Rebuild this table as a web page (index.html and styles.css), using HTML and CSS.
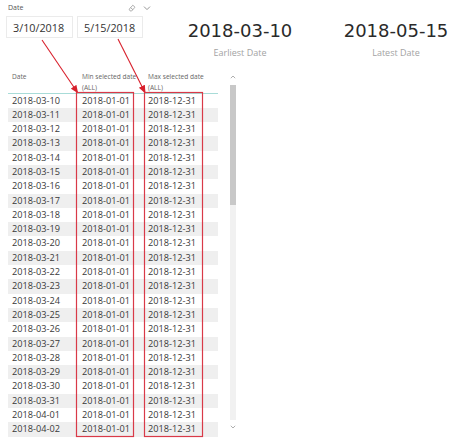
FILE: index.html
```html
<!DOCTYPE html>
<html>
<head>
<meta charset="utf-8">
<link rel="stylesheet" href="styles.css">
</head>
<body>
<div class="page">
  <div class="top">
    <div class="slicer">
      <div class="slicer-head">
        <span class="slicer-title">Date</span>
        <span class="slicer-icons">
          <svg class="ico" width="8" height="8" viewBox="0 0 8 8"><path d="M1.2 5.2 L4.8 1.2 L7 3.2 L3.6 7 L2.2 7 Z M2.6 3.6 L5 5.8" fill="none" stroke="#9a9a9a" stroke-width="0.8" stroke-linejoin="round"/></svg>
          <svg class="ico" width="8" height="8" viewBox="0 0 8 8"><path d="M1 2.6 L4 5.6 L7 2.6" fill="none" stroke="#8a8a8a" stroke-width="0.9"/></svg>
        </span>
      </div>
      <div class="inputs">
        <div class="inp">3/10/2018</div>
        <div class="inp">5/15/2018</div>
      </div>
    </div>
    <div class="kpi">
      <div class="kpi-val">2018-03-10</div>
      <div class="kpi-lbl">Earliest Date</div>
    </div>
    <div class="kpi">
      <div class="kpi-val">2018-05-15</div>
      <div class="kpi-lbl">Latest Date</div>
    </div>
  </div>
  <div class="tablewrap">
    <div class="table">
      <div class="thead">
        <div class="th c1">Date</div>
        <div class="th c2">Min selected date<br>(ALL)</div>
        <div class="th c3">Max selected date<br>(ALL)</div>
      </div>
      <div class="rows" id="rows">
        <div class="row"><span class="c1">2018-03-10</span><span class="c2">2018-01-01</span><span class="c3">2018-12-31</span></div>
        <div class="row alt"><span class="c1">2018-03-11</span><span class="c2">2018-01-01</span><span class="c3">2018-12-31</span></div>
        <div class="row"><span class="c1">2018-03-12</span><span class="c2">2018-01-01</span><span class="c3">2018-12-31</span></div>
        <div class="row alt"><span class="c1">2018-03-13</span><span class="c2">2018-01-01</span><span class="c3">2018-12-31</span></div>
        <div class="row"><span class="c1">2018-03-14</span><span class="c2">2018-01-01</span><span class="c3">2018-12-31</span></div>
        <div class="row alt"><span class="c1">2018-03-15</span><span class="c2">2018-01-01</span><span class="c3">2018-12-31</span></div>
        <div class="row"><span class="c1">2018-03-16</span><span class="c2">2018-01-01</span><span class="c3">2018-12-31</span></div>
        <div class="row alt"><span class="c1">2018-03-17</span><span class="c2">2018-01-01</span><span class="c3">2018-12-31</span></div>
        <div class="row"><span class="c1">2018-03-18</span><span class="c2">2018-01-01</span><span class="c3">2018-12-31</span></div>
        <div class="row alt"><span class="c1">2018-03-19</span><span class="c2">2018-01-01</span><span class="c3">2018-12-31</span></div>
        <div class="row"><span class="c1">2018-03-20</span><span class="c2">2018-01-01</span><span class="c3">2018-12-31</span></div>
        <div class="row alt"><span class="c1">2018-03-21</span><span class="c2">2018-01-01</span><span class="c3">2018-12-31</span></div>
        <div class="row"><span class="c1">2018-03-22</span><span class="c2">2018-01-01</span><span class="c3">2018-12-31</span></div>
        <div class="row alt"><span class="c1">2018-03-23</span><span class="c2">2018-01-01</span><span class="c3">2018-12-31</span></div>
        <div class="row"><span class="c1">2018-03-24</span><span class="c2">2018-01-01</span><span class="c3">2018-12-31</span></div>
        <div class="row alt"><span class="c1">2018-03-25</span><span class="c2">2018-01-01</span><span class="c3">2018-12-31</span></div>
        <div class="row"><span class="c1">2018-03-26</span><span class="c2">2018-01-01</span><span class="c3">2018-12-31</span></div>
        <div class="row alt"><span class="c1">2018-03-27</span><span class="c2">2018-01-01</span><span class="c3">2018-12-31</span></div>
        <div class="row"><span class="c1">2018-03-28</span><span class="c2">2018-01-01</span><span class="c3">2018-12-31</span></div>
        <div class="row alt"><span class="c1">2018-03-29</span><span class="c2">2018-01-01</span><span class="c3">2018-12-31</span></div>
        <div class="row"><span class="c1">2018-03-30</span><span class="c2">2018-01-01</span><span class="c3">2018-12-31</span></div>
        <div class="row alt"><span class="c1">2018-03-31</span><span class="c2">2018-01-01</span><span class="c3">2018-12-31</span></div>
        <div class="row"><span class="c1">2018-04-01</span><span class="c2">2018-01-01</span><span class="c3">2018-12-31</span></div>
        <div class="row alt"><span class="c1">2018-04-02</span><span class="c2">2018-01-01</span><span class="c3">2018-12-31</span></div>
      </div>
    </div>
    <div class="scroll">
      <div class="sb-btn"><svg width="6" height="4" viewBox="0 0 6 4"><path d="M0.8 3.2 L3 1 L5.2 3.2" fill="none" stroke="#9a9a9a" stroke-width="0.8"/></svg></div>
      <div class="sb-track"><div class="sb-thumb"></div></div>
      <div class="sb-btn"><svg width="6" height="4" viewBox="0 0 6 4"><path d="M0.8 0.8 L3 3 L5.2 0.8" fill="none" stroke="#9a9a9a" stroke-width="0.8"/></svg></div>
    </div>
  </div>
  <svg class="overlay" width="474" height="440" viewBox="0 0 474 440">
    <defs>
      <marker id="ah" markerWidth="8" markerHeight="8" refX="7" refY="4" orient="auto" markerUnits="userSpaceOnUse">
        <path d="M0 0.6 L8 4 L0 7.4 Z" fill="#d8202c"/>
      </marker>
    </defs>
    <line x1="42" y1="40" x2="77.5" y2="92.5" stroke="#d8202c" stroke-width="1.1" marker-end="url(#ah)"/>
    <line x1="118" y1="39" x2="145" y2="92.5" stroke="#d8202c" stroke-width="1.1" marker-end="url(#ah)"/>
    <rect x="76.5" y="92.5" width="57" height="344" fill="none" stroke="#d93a48" stroke-width="1.2"/>
    <rect x="144.5" y="92.5" width="58" height="344" fill="none" stroke="#d93a48" stroke-width="1.2"/>
  </svg>
</div>
</body>
</html>
```
FILE: styles.css
```css
* { box-sizing: border-box; }
html, body { margin: 0; padding: 0; background: #fff; }
body { font-family: "Open Sans", "Noto Sans", sans-serif; color: #333; }
.page { position: relative; width: 474px; height: 440px; overflow: hidden; }

.top { display: grid; grid-template-columns: 162px 1fr 1fr; height: 69px; }
.slicer { padding: 2px 6px 0 6px; }
.slicer-head { display: flex; align-items: center; height: 11px; padding: 0 5px 0 2px; }
.slicer-title { font-size: 7px; line-height: 11px; color: #555; }
.slicer-icons { margin-left: auto; display: flex; gap: 7px; align-items: center; }
.ico { display: block; }
.inputs { display: flex; gap: 4px; margin-top: 3px; }
.inp { width: 67px; height: 22px; border: 1px solid #ebebeb; padding-left: 6px; font-size: 10.8px; line-height: 21px; color: #333; }
.inp + .inp { width: 66px; }

.kpi { display: flex; flex-direction: column; align-items: center; padding-top: 19px; }
.kpi-val { font-family: "DejaVu Sans", sans-serif; font-size: 18px; line-height: 24px; color: #2a2a2a; }
.kpi-lbl { font-size: 9px; line-height: 12px; margin-top: 4px; color: #a3a3a3; }

.tablewrap { display: flex; padding-left: 8px; }
.table { width: 210px; }
.thead { display: grid; grid-template-columns: 68px 66px 76px; height: 24.5px; border-bottom: 1.5px solid #a8dcd8; padding-top: 1.5px; }
.th { font-size: 6.6px; line-height: 11px; color: #666; }
.c1 { padding-left: 4px; }
.c2 { padding-left: 6px; }
.c3 { padding-left: 6px; }
.row { display: grid; grid-template-columns: 68px 66px 76px; height: 14.3px; font-size: 9.2px; line-height: 14.6px; color: #3a3a3a; }
.row.alt { background: #efefef; }

.scroll { margin-left: 12px; width: 6px; display: flex; flex-direction: column; }
.sb-btn { height: 16px; display: flex; align-items: center; justify-content: center; }
.sb-btn:last-child { height: 14px; }
.sb-track { height: 335px; background: #f1f1f1; }
.sb-thumb { height: 120px; background: #c8c8c8; }

.overlay { position: absolute; left: 0; top: 0; pointer-events: none; }
```
